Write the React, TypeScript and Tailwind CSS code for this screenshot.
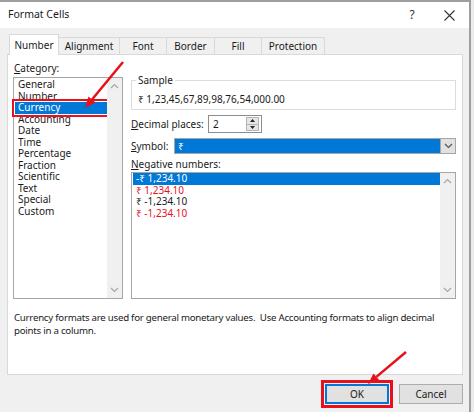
import React from "react";

const font = { fontFamily: '"Noto Sans", "DejaVu Sans", sans-serif' };

function ChevronUp() {
  return (
    <svg width="9" height="6" viewBox="0 0 9 6">
      <polyline points="1,5 4.5,1.5 8,5" fill="none" stroke="#a6a6a6" strokeWidth="1.2" />
    </svg>
  );
}
function ChevronDown({ color = "#a6a6a6" }: { color?: string }) {
  return (
    <svg width="9" height="6" viewBox="0 0 9 6">
      <polyline points="1,1 4.5,4.5 8,1" fill="none" stroke={color} strokeWidth="1.2" />
    </svg>
  );
}

function ScrollTrack() {
  return (
    <div className="w-[15px] h-full bg-[#f0f0f0] flex flex-col items-center justify-between pt-[5px] pb-[5px]">
      <ChevronUp />
      <ChevronDown />
    </div>
  );
}

const categories = [
  "General",
  "Number",
  "Currency",
  "Accounting",
  "Date",
  "Time",
  "Percentage",
  "Fraction",
  "Scientific",
  "Text",
  "Special",
  "Custom",
];

const tabs = [
  { label: "Alignment", w: "w-[61px]" },
  { label: "Font", w: "w-[47px]" },
  { label: "Border", w: "w-[48px]" },
  { label: "Fill", w: "w-[47px]" },
  { label: "Protection", w: "w-[63px]" },
];

export default function App() {
  return (
    <div
      className="relative w-[474px] h-[412px] flex overflow-hidden bg-[#ececec] text-[10px] text-[#1a1a1a]"
      style={font}
    >
      <div className="w-[471px] h-full flex flex-col border-t-2 border-r-2 border-[#9e9e9e]">
        {/* Title bar */}
        <div className="h-[26px] bg-white flex items-center pl-[8px] pr-[14px] text-[10.5px]">
          <span className="flex-1">Format Cells</span>
          <span className="w-[12px] text-center text-[12px] mr-[26px] text-[#333]">?</span>
          <svg width="11" height="11" viewBox="0 0 11 11">
            <path d="M0.5 0.5 L10.5 10.5 M10.5 0.5 L0.5 10.5" stroke="#333" strokeWidth="1.1" />
          </svg>
        </div>

        {/* Body */}
        <div className="flex-1 bg-[#f0f0f0] flex flex-col pl-[7px] pt-[7px]">
          {/* Tabs */}
          <div className="flex items-end h-[19px] pl-[2px] relative z-10">
            <div className="w-[50px] h-[21px] -mb-px bg-white border border-b-0 border-[#d9d9d9] flex items-center justify-center">
              Number
            </div>
            {tabs.map((t) => (
              <div
                key={t.label}
                className={`${t.w} h-[17px] border border-l-0 border-b-0 border-[#d9d9d9] flex items-center justify-center`}
              >
                {t.label}
              </div>
            ))}
          </div>

          {/* Panel */}
          <div className="w-[456px] h-[321px] bg-white border border-[#d9d9d9] flex flex-col pl-[5px]">
            <div className="flex gap-[8px] pt-[7px]">
              {/* Left column */}
              <div className="w-[110px] flex flex-col">
                <div className="h-[13px] leading-[13px] pl-[1px]">
                  <u>C</u>ategory:
                </div>
                <div className="mt-[2px] h-[222px] border border-[#a6a6a6] flex">
                  <div className="flex-1 pl-[1px] pt-[1px]">
                    {categories.map((c) =>
                      c === "Currency" ? (
                        <div
                          key={c}
                          className="h-[11.5px] leading-[11.5px] px-[3px] bg-[#0078d7] text-white outline-2 outline-offset-1 outline-[#e8101a]"
                        >
                          {c}
                        </div>
                      ) : (
                        <div key={c} className="h-[11.5px] leading-[11.5px] px-[3px]">
                          {c}
                        </div>
                      )
                    )}
                  </div>
                  <ScrollTrack />
                </div>
              </div>

              {/* Right column */}
              <div className="w-[325px] flex flex-col">
                <div className="relative mt-[18px] h-[30px] border border-[#dcdcdc] pt-[12px] pl-[6px] leading-[13px]">
                  <span className="absolute -top-[7px] left-[4px] bg-white px-[2px] leading-[13px]">Sample</span>
                  ₹ 1,23,45,67,89,98,76,54,000.00
                </div>

                <div className="flex items-center mt-[5px] h-[18px]">
                  <div className="w-[77px]">
                    <u>D</u>ecimal places:
                  </div>
                  <div className="w-[54px] h-[18px] border border-[#8c8c8c] bg-white flex items-center">
                    <span className="flex-1 pl-[4px]">2</span>
                    <div className="w-[13px] h-[14px] mr-[2px] border border-[#b4b4b4] bg-[#e6e6e6] flex flex-col">
                      <div className="flex-1 flex items-center justify-center border-b border-[#b4b4b4]">
                        <svg width="5" height="3" viewBox="0 0 5 3">
                          <polygon points="0,3 2.5,0 5,3" fill="#222" />
                        </svg>
                      </div>
                      <div className="flex-1 flex items-center justify-center">
                        <svg width="5" height="3" viewBox="0 0 5 3">
                          <polygon points="0,0 2.5,3 5,0" fill="#222" />
                        </svg>
                      </div>
                    </div>
                  </div>
                </div>

                <div className="flex items-center mt-[5px] h-[16px]">
                  <div className="w-[43px]">
                    <u>S</u>ymbol:
                  </div>
                  <div className="w-[282px] h-[16px] border border-[#a6a6a6] bg-white flex">
                    <div className="flex-1 bg-[#0078d7] text-white pl-[3px] leading-[14px]">₹</div>
                    <div className="w-[15px] bg-[#e1e1e1] border-l border-[#a6a6a6] flex items-center justify-center">
                      <ChevronDown color="#555" />
                    </div>
                  </div>
                </div>

                <div className="mt-[4px] h-[12px] leading-[12px]">
                  <u>N</u>egative numbers:
                </div>
                <div className="mt-[2px] h-[127px] border border-[#a6a6a6] flex">
                  <div className="flex-1 pl-[1px]">
                    <div className="h-[11.5px] leading-[11.5px] px-[3px] bg-[#0078d7] text-white">-₹ 1,234.10</div>
                    <div className="h-[11.5px] leading-[11.5px] px-[3px] text-[#e8101f]">₹ 1,234.10</div>
                    <div className="h-[11.5px] leading-[11.5px] px-[3px]">₹ -1,234.10</div>
                    <div className="h-[11.5px] leading-[11.5px] px-[3px] text-[#e8101f]">₹ -1,234.10</div>
                  </div>
                  <ScrollTrack />
                </div>
              </div>
            </div>

            <div className="mt-[12px] pl-[1px] leading-[13px] w-[448px] text-[9.7px] tracking-[-0.25px]">
              Currency formats are used for general monetary values.&nbsp; Use Accounting formats to align decimal
              points in a column.
            </div>
          </div>

          {/* Buttons */}
          <div className="w-[456px] flex justify-end items-center gap-[6px] mt-[5px]">
            <div className="border-[3px] border-[#e8101a] p-[1px]">
              <div className="w-[64px] h-[20px] bg-[#e1e1e1] border-2 border-[#0078d7] flex items-center justify-center">
                OK
              </div>
            </div>
            <div className="w-[64px] h-[20px] bg-[#e1e1e1] border border-[#adadad] flex items-center justify-center">
              Cancel
            </div>
          </div>
        </div>
      </div>

      {/* Annotation arrows */}
      <svg
        className="absolute inset-0 pointer-events-none z-20"
        width="474"
        height="412"
        viewBox="0 0 474 412"
      >
        <line x1="123" y1="62" x2="92" y2="99.5" stroke="#e8101a" strokeWidth="2.5" />
        <polygon points="85,108 95.5,102.4 88.5,96.6" fill="#e8101a" />
        <line x1="406" y1="352" x2="376.4" y2="376.9" stroke="#e8101a" strokeWidth="2.5" />
        <polygon points="368,384 379.3,380.3 373.5,373.5" fill="#e8101a" />
      </svg>
    </div>
  );
}
